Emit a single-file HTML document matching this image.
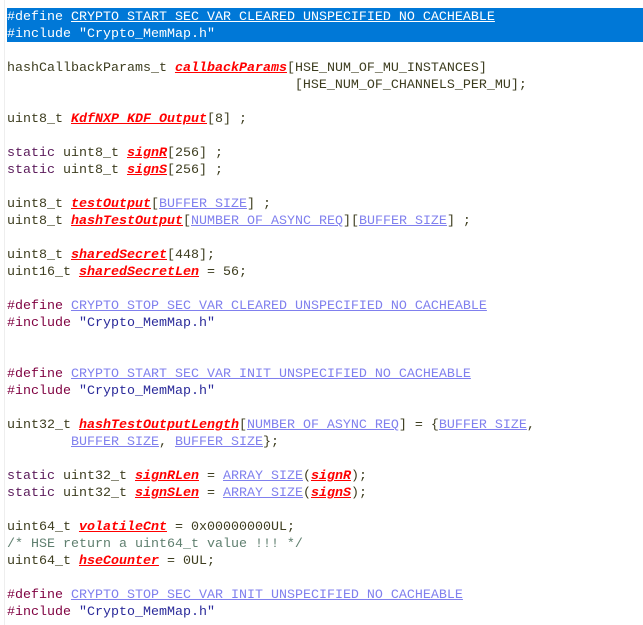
<!DOCTYPE html>
<html><head><meta charset="utf-8"><style>
html,body{margin:0;padding:0;background:#fff;width:643px;height:625px;overflow:hidden}
pre{margin:0;position:absolute;left:7px;top:9px;font-family:"Liberation Mono",monospace;font-size:13.33px;line-height:17px;color:#3d3d1f}
.hl{position:absolute;left:7px;top:8px;width:636px;height:34px;background:#0078d7}
.hl2{color:#fff}
.hl2 u{text-decoration:underline}
.m{color:#8080ee;text-decoration:underline}
.v{color:#f00;font-style:italic;font-weight:bold;text-decoration:underline}
.p{color:#7f0040}
.s{color:#2a2a9a}
.k{color:#5a1a5a}
.c{color:#5f7f6f}
.ln{position:absolute;left:4px;top:0;width:1px;height:625px;background:#eee}
</style></head><body>
<div class="ln"></div>
<div class="hl"></div>
<pre><span class="hl2">#define <u>CRYPTO START SEC VAR CLEARED UNSPECIFIED NO CACHEABLE</u>
#include "Crypto_MemMap.h"</span>

hashCallbackParams_t <span class="v">callbackParams</span>[HSE_NUM_OF_MU_INSTANCES]
                                    [HSE_NUM_OF_CHANNELS_PER_MU];

uint8_t <span class="v">KdfNXP KDF Output</span>[8] ;

<span class="k">static</span> uint8_t <span class="v">signR</span>[256] ;
<span class="k">static</span> uint8_t <span class="v">signS</span>[256] ;

uint8_t <span class="v">testOutput</span>[<span class="m">BUFFER SIZE</span>] ;
uint8_t <span class="v">hashTestOutput</span>[<span class="m">NUMBER OF ASYNC REQ</span>][<span class="m">BUFFER SIZE</span>] ;

uint8_t <span class="v">sharedSecret</span>[448];
uint16_t <span class="v">sharedSecretLen</span> = 56;

<span class="p">#define</span> <span class="m">CRYPTO STOP SEC VAR CLEARED UNSPECIFIED NO CACHEABLE</span>
<span class="p">#include</span> <span class="s">"Crypto_MemMap.h"</span>


<span class="p">#define</span> <span class="m">CRYPTO START SEC VAR INIT UNSPECIFIED NO CACHEABLE</span>
<span class="p">#include</span> <span class="s">"Crypto_MemMap.h"</span>

uint32_t <span class="v">hashTestOutputLength</span>[<span class="m">NUMBER OF ASYNC REQ</span>] = {<span class="m">BUFFER SIZE</span>,
        <span class="m">BUFFER SIZE</span>, <span class="m">BUFFER SIZE</span>};

<span class="k">static</span> uint32_t <span class="v">signRLen</span> = <span class="m">ARRAY SIZE</span>(<span class="v">signR</span>);
<span class="k">static</span> uint32_t <span class="v">signSLen</span> = <span class="m">ARRAY SIZE</span>(<span class="v">signS</span>);

uint64_t <span class="v">volatileCnt</span> = 0x00000000UL;
<span class="c">/* HSE return a uint64_t value !!! */</span>
uint64_t <span class="v">hseCounter</span> = 0UL;

<span class="p">#define</span> <span class="m">CRYPTO STOP SEC VAR INIT UNSPECIFIED NO CACHEABLE</span>
<span class="p">#include</span> <span class="s">"Crypto_MemMap.h"</span></pre>
</body></html>
